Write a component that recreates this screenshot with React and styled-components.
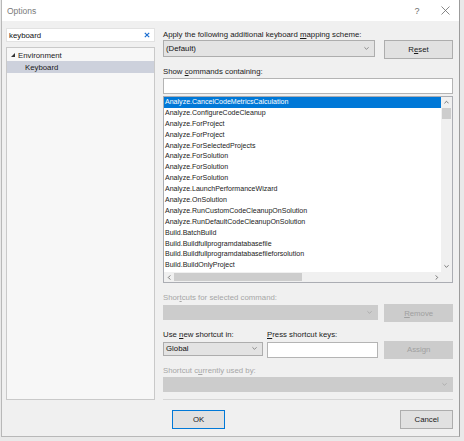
import React from "react";
import styled, { createGlobalStyle } from "styled-components";

const Global = createGlobalStyle`
  html, body { margin: 0; padding: 0; }
  body {
    background: #e9e9e9;
    font-family: "Liberation Sans", Arial, sans-serif;
    color: #1a1a1a;
  }
  #root { width: 464px; height: 441px; overflow: hidden; }
  * { box-sizing: border-box; }
`;

const Window = styled.div`
  margin-left: 1px;
  width: 459px;
  height: 437px;
  background: #f0f0f0;
  border-left: 1px solid #b8b8b8;
  border-right: 1px solid #9c9c9c;
  border-bottom: 1px solid #b8b8b8;
  display: flex;
  flex-direction: column;
`;

const TitleBar = styled.div`
  height: 21px;
  background: #ffffff;
  display: flex;
  align-items: center;
  padding-left: 5px;
  font-size: 8.5px;
  color: #7a7a7a;
`;

const TitleText = styled.span`
  flex: 1;
`;

const TitleBtn = styled.div`
  width: 28px;
  height: 21px;
  display: flex;
  align-items: center;
  justify-content: center;
  color: #6a6a6a;
  font-size: 9px;
`;

const Main = styled.div`
  display: flex;
  padding-left: 4px;
  gap: 8px;
`;

const LeftCol = styled.div`
  width: 149px;
  padding-top: 7px;
  display: flex;
  flex-direction: column;
`;

const SearchBox = styled.div`
  height: 14px;
  background: #ffffff;
  border: 1px solid #e2e2e2;
  display: flex;
  align-items: center;
  padding: 0 4px 0 2px;
  font-size: 7.8px;
  color: #111;
`;

const SearchText = styled.span`
  flex: 1;
`;

const Tree = styled.div`
  margin-top: 5px;
  height: 353px;
  background: #f7f7f7;
  border: 1px solid #c9c9c9;
  padding-top: 1px;
`;

const TreeRow = styled.div`
  height: 12px;
  display: flex;
  align-items: center;
  padding-left: ${(p) => p.$indent}px;
  font-size: 7.8px;
  background: ${(p) => (p.$selected ? "#cdd1dc" : "transparent")};
  gap: 3px;
`;

const RightCol = styled.div`
  width: 290px;
  display: flex;
  flex-direction: column;
`;

const Label = styled.div`
  height: 11px;
  line-height: 11px;
  font-size: 7.8px;
  margin-top: ${(p) => p.$mt || 0}px;
  color: ${(p) => (p.$disabled ? "#a6a6a6" : "#1a1a1a")};
  white-space: nowrap;
`;

const Row = styled.div`
  display: flex;
  align-items: flex-start;
  margin-top: ${(p) => p.$mt || 0}px;
`;

const Combo = styled.div`
  width: ${(p) => p.$w}px;
  height: ${(p) => p.$h || 15}px;
  margin-top: ${(p) => p.$mt || 0}px;
  background: ${(p) => (p.$disabled ? "#cccccc" : "#e3e3e3")};
  border: 1px solid ${(p) => (p.$disabled ? "#cccccc" : "#adadad")};
  display: flex;
  align-items: center;
  padding: 0 5px 0 2px;
  font-size: 7.8px;
  color: #111;
`;

const ComboText = styled.span`
  flex: 1;
`;

const Button = styled.div`
  width: ${(p) => p.$w || 69}px;
  height: ${(p) => p.$h || 18}px;
  margin-left: auto;
  background: ${(p) => (p.$disabled ? "#cccccc" : "#e1e1e1")};
  border: 1px solid
    ${(p) => (p.$primary ? "#0078d7" : p.$disabled ? "#cccccc" : "#adadad")};
  display: flex;
  align-items: center;
  justify-content: center;
  font-size: 7.8px;
  color: ${(p) => (p.$disabled ? "#a0a0a0" : "#1a1a1a")};
`;

const TextInput = styled.div`
  height: ${(p) => p.$h || 16}px;
  width: ${(p) => (p.$w ? `${p.$w}px` : "auto")};
  margin-top: ${(p) => p.$mt || 0}px;
  background: #ffffff;
  border: 1px solid #b4b4b4;
`;

const ListBox = styled.div`
  margin-top: 2px;
  height: 187px;
  border: 1px solid #abadb3;
  background: #ffffff;
  display: grid;
  grid-template-columns: 1fr 11px;
  grid-template-rows: 1fr 10px;
  overflow: hidden;
`;

const Rows = styled.div`
  overflow: hidden;
`;

const ListRow = styled.div`
  height: 10.9px;
  line-height: 10.9px;
  font-size: 7.05px;
  padding-left: 1px;
  white-space: nowrap;
  background: ${(p) => (p.$selected ? "#0078d7" : "transparent")};
  color: ${(p) => (p.$selected ? "#ffffff" : "#1a1a1a")};
`;

const VScroll = styled.div`
  background: #f0f0f0;
  display: flex;
  flex-direction: column;
  align-items: center;
`;

const ScrollArrow = styled.div`
  width: 10px;
  height: ${(p) => p.$h || 10}px;
  display: flex;
  align-items: center;
  justify-content: center;
  flex-shrink: 0;
`;

const VThumb = styled.div`
  width: 9px;
  height: 11px;
  background: #cdcdcd;
`;

const VSpacer = styled.div`
  flex: 1;
`;

const HScroll = styled.div`
  background: #f0f0f0;
  display: flex;
  align-items: center;
`;

const HThumb = styled.div`
  width: 128px;
  height: 8px;
  background: #cdcdcd;
`;

const Corner = styled.div`
  background: #f0f0f0;
`;

const ShortcutGrid = styled.div`
  display: grid;
  grid-template-columns: 100px 110.7px 1fr;
  column-gap: 4px;
  margin-top: ${(p) => p.$mt || 0}px;
  align-items: start;
`;

const Separator = styled.div`
  margin-top: 7px;
  height: 1px;
  background: #d6d6d6;
`;

const Footer = styled.div`
  display: flex;
  justify-content: flex-end;
  gap: 5px;
  margin-top: 10px;
  padding-right: 5.7px;
`;

const Chevron = ({ dir = "down", color = "#7a7a7a", size = 5 }) => {
  const paths = {
    down: "M0.5 1.5 L3 4 L5.5 1.5",
    up: "M0.5 4 L3 1.5 L5.5 4",
    left: "M4 0.5 L1.5 3 L4 5.5",
    right: "M2 0.5 L4.5 3 L2 5.5",
  };
  return (
    <svg width={size} height={size} viewBox="0 0 6 6">
      <path d={paths[dir]} fill="none" stroke={color} strokeWidth="1" />
    </svg>
  );
};

const commands = [
  "Analyze.CancelCodeMetricsCalculation",
  "Analyze.ConfigureCodeCleanup",
  "Analyze.ForProject",
  "Analyze.ForProject",
  "Analyze.ForSelectedProjects",
  "Analyze.ForSolution",
  "Analyze.ForSolution",
  "Analyze.ForSolution",
  "Analyze.LaunchPerformanceWizard",
  "Analyze.OnSolution",
  "Analyze.RunCustomCodeCleanupOnSolution",
  "Analyze.RunDefaultCodeCleanupOnSolution",
  "Build.BatchBuild",
  "Build.Buildfullprogramdatabasefile",
  "Build.Buildfullprogramdatabasefileforsolution",
  "Build.BuildOnlyProject",
];

export default function App() {
  return (
    <>
      <Global />
      <Window>
        <TitleBar>
          <TitleText>Options</TitleText>
          <TitleBtn>?</TitleBtn>
          <TitleBtn>
            <svg width="9" height="9" viewBox="0 0 9 9">
              <path d="M0.5 0.5 L8.5 8.5 M8.5 0.5 L0.5 8.5" stroke="#6a6a6a" strokeWidth="0.8" />
            </svg>
          </TitleBtn>
        </TitleBar>
        <Main>
          <LeftCol>
            <SearchBox>
              <SearchText>keyboard</SearchText>
              <svg width="6" height="6" viewBox="0 0 6 6">
                <path d="M0.8 0.8 L5.2 5.2 M5.2 0.8 L0.8 5.2" stroke="#1c6fd1" strokeWidth="1.2" />
              </svg>
            </SearchBox>
            <Tree>
              <TreeRow $indent={4}>
                <svg width="4" height="4" viewBox="0 0 4 4">
                  <polygon points="4,0 4,4 0,4" fill="#333" />
                </svg>
                <span>Environment</span>
              </TreeRow>
              <TreeRow $indent={18} $selected>
                <span>Keyboard</span>
              </TreeRow>
            </Tree>
          </LeftCol>
          <RightCol>
            <Label $mt={7.5}>
              Apply the following additional keyboard <u>m</u>apping scheme:
            </Label>
            <Row>
              <Combo $w={212} $h={16.5} $mt={0.5}>
                <ComboText>(Default)</ComboText>
                <Chevron />
              </Combo>
              <Button $w={69} $h={19}>
                R<u>e</u>set
              </Button>
            </Row>
            <Label $mt={7}>
              Show <u>c</u>ommands containing:
            </Label>
            <TextInput $mt={1.5} />
            <ListBox>
              <Rows>
                {commands.map((c, i) => (
                  <ListRow key={i} $selected={i === 0}>
                    {c}
                  </ListRow>
                ))}
              </Rows>
              <VScroll>
                <ScrollArrow $h={11}>
                  <Chevron dir="up" color="#606060" />
                </ScrollArrow>
                <VThumb />
                <VSpacer />
                <ScrollArrow $h={11}>
                  <Chevron dir="down" color="#606060" />
                </ScrollArrow>
              </VScroll>
              <HScroll>
                <ScrollArrow>
                  <Chevron dir="left" color="#606060" />
                </ScrollArrow>
                <HThumb />
                <VSpacer />
                <ScrollArrow>
                  <Chevron dir="right" color="#606060" />
                </ScrollArrow>
              </HScroll>
              <Corner />
            </ListBox>
            <Label $mt={8.5} $disabled>
              Shor<u>t</u>cuts for selected command:
            </Label>
            <Row $mt={1.5}>
              <Combo $w={215} $h={15} $mt={1} $disabled>
                <ComboText />
                <Chevron color="#a8a8a8" />
              </Combo>
              <Button $w={68.7} $h={18} $disabled>
                <u>R</u>emove
              </Button>
            </Row>
            <ShortcutGrid $mt={6.5}>
              <Label>
                Use <u>n</u>ew shortcut in:
              </Label>
              <Label>
                <u>P</u>ress shortcut keys:
              </Label>
              <span />
            </ShortcutGrid>
            <ShortcutGrid $mt={1.2}>
              <Combo $w={100} $h={14.5} $mt={1}>
                <ComboText>Global</ComboText>
                <Chevron />
              </Combo>
              <TextInput $mt={1} $h={16} />
              <Button $w={68.7} $h={18.3} $disabled>
                Assign
              </Button>
            </ShortcutGrid>
            <Label $mt={6} $disabled>
              Shortcut c<u>u</u>rrently used by:
            </Label>
            <Combo $w={290} $h={15} $mt={1} $disabled>
              <ComboText />
              <Chevron color="#a8a8a8" />
            </Combo>
            <Separator />
          </RightCol>
        </Main>
        <Footer>
          <Button $w={53.3} $h={18.5} $primary>
            OK
          </Button>
          <Button $w={53.3} $h={18.5}>
            Cancel
          </Button>
        </Footer>
      </Window>
    </>
  );
}
